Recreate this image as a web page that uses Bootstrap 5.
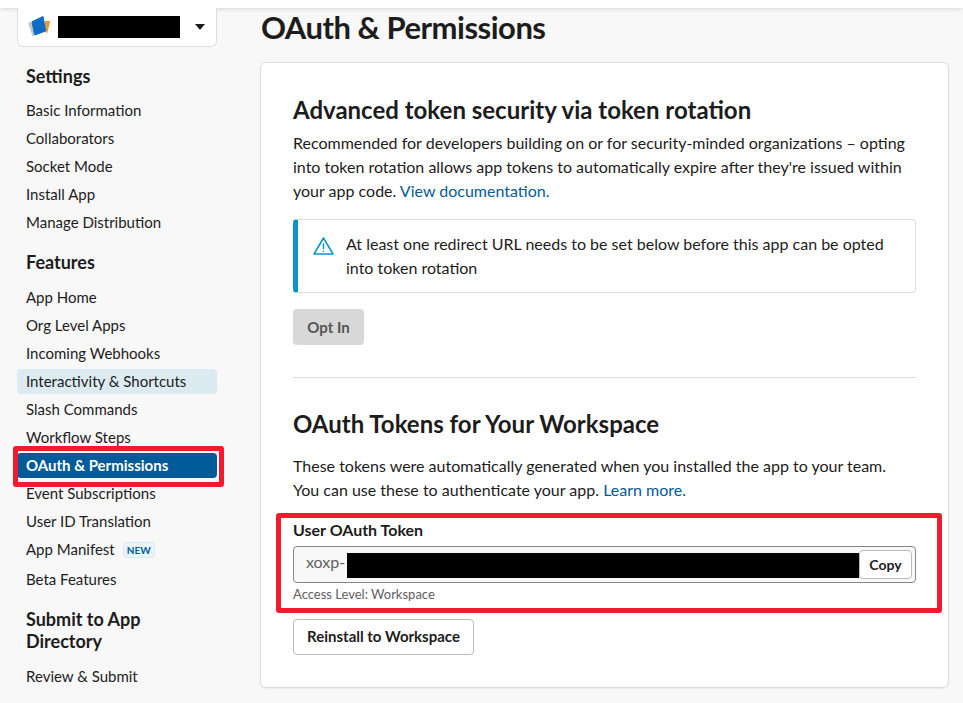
<!DOCTYPE html>
<html lang="en">
<head>
<meta charset="utf-8">
<title>OAuth &amp; Permissions</title>
<link rel="stylesheet" href="https://cdn.jsdelivr.net/npm/bootstrap@5.3.0/dist/css/bootstrap.min.css">
<style>
html,body{height:703px;overflow:hidden}
body{background:#f8f8f8;font-family:Lato,"Liberation Sans",sans-serif;color:#1d1c1d;font-size:15px;line-height:24px;position:relative}
.topstrip{height:8px;background:#fff;box-shadow:0 1px 4px rgba(0,0,0,.14)}
.shell{padding-left:17px;gap:43px}
.sidebar{width:200px;flex:none}
.appsel{height:39px;background:#fff;border:1px solid #ddd;border-top:0;border-radius:0 0 6px 6px;padding:0 11px 0 10px}
.redact{background:#000;height:22px;width:122px}
.caret{width:0;height:0;border-left:5px solid transparent;border-right:5px solid transparent;border-top:6px solid #1d1c1d}
.sidehead{font-size:18px;line-height:22px;font-weight:700;padding-left:9px;margin:16px 0 0}
.sidehead.firsthead{margin-top:18px}
.sidehead.featurehead{margin-top:16px}
.sidelist{list-style:none;margin:11px 0 0;padding:0}
.sidelist.lastlist{margin-top:12px}
.sidelist a{display:block;height:25px;line-height:24px;margin-bottom:3px;padding-left:9px;border-radius:4px;color:#1d1c1d;text-decoration:none}
.sidelist a.hover-item{background:#dcebf1}
.sidelist a.current{background:#005b98;color:#fff;font-weight:700}
.sidelist a.betaitem{margin-top:5px}
.sidelist.featurelist{margin-top:12px}
.newtag{font-size:10px;line-height:14px;font-weight:700;color:#005b98;background:#e8f5fa;border:1px solid #d4ebf4;border-radius:4px;padding:0 3px;margin-left:8px;display:inline-block;vertical-align:1px}
.maincol{width:689px;flex:none}
.pagetitle{font-size:31px;line-height:38px;font-weight:700;margin:0 0 16px;letter-spacing:-.5px;padding-left:1px}
.panel{height:626px;background:#fff;border:1px solid #ddd;border-radius:6px;padding:32px;box-shadow:0 1px 2px rgba(0,0,0,.06);font-size:16px}
.panelhead{font-size:24px;line-height:30px;font-weight:700;margin:0 0 6px}
.panelhead.tokenhead{margin-bottom:15px}
.panel a{color:#005b98;text-decoration:none}
.notice{height:74px;margin-top:16px;border:1px solid #ddd;border-left:5px solid #0a94cc;border-radius:4px;padding:12px 16px 12px 15px;gap:12px}
.notice p{margin:0}
.optbtn{height:36px;width:71px;background:#d8d8d8;color:#555;font-weight:700;border:0;border-radius:4px;margin-top:16px;padding:0;font-size:15px}
.rule{margin:32px 0 31px;border:0;border-top:1px solid #ddd;opacity:1}
.tokenlabel{font-weight:700;line-height:20px;margin:18px 0 6px}
.tokenbox{height:37px;border:1px solid #868686;border-radius:4px;background:#f8f8f8;padding:3px 3px 3px 12px}
.xoxp{color:#616061;width:41px;flex:none}
.tokenredact{background:#000;height:25px;flex:1;margin-top:3px}
.copybtn{width:53px;height:29px;background:#fff;border:1px solid #bbb;border-radius:4px;font-size:14px;font-weight:700;padding:0;color:#1d1c1d}
.hint{font-size:13px;line-height:16px;color:#616061;margin-top:3px}
.reinstall{height:36px;width:181px;margin-top:17px;background:#fff;border:1px solid #bbb;border-radius:4px;font-weight:700;font-size:15px;padding:0 0 2px;color:#1d1c1d}
.optbtn{padding-bottom:1px}
.redbox{position:absolute;border:5px solid #ee1c2c;border-radius:3px;pointer-events:none}
.redone{left:13px;top:446px;width:211px;height:41px}
.redtwo{left:276px;top:513px;width:666px;height:100px}
</style>
</head>
<body>
<div class="topstrip"></div>
<div class="d-flex shell">
  <nav class="sidebar">
    <div class="appsel d-flex align-items-center">
      <svg width="22" height="22" viewBox="-1 0 22 22" class="flex-shrink-0">
        <path d="M-1 6.7 L3 5.7 L5.7 19 L3.6 20.5Z" fill="#c3c8cd"/>
        <path d="M15.7 5 L21.3 5 L18 18 L16.5 15Z" fill="#e89a36"/>
        <path d="M3 5.7 L14 0.5 L16.7 15 L5.7 19Z" fill="#0d6cc4" stroke="#0d6cc4" stroke-linejoin="round"/>
      </svg>
      <div class="redact ms-2"></div>
      <div class="caret ms-auto"></div>
    </div>
    <h2 class="sidehead firsthead">Settings</h2>
    <ul class="sidelist">
      <li><a href="#">Basic Information</a></li>
      <li><a href="#">Collaborators</a></li>
      <li><a href="#">Socket Mode</a></li>
      <li><a href="#">Install App</a></li>
      <li><a href="#">Manage Distribution</a></li>
    </ul>
    <h2 class="sidehead featurehead">Features</h2>
    <ul class="sidelist featurelist">
      <li><a href="#">App Home</a></li>
      <li><a href="#">Org Level Apps</a></li>
      <li><a href="#">Incoming Webhooks</a></li>
      <li><a href="#" class="hover-item">Interactivity &amp; Shortcuts</a></li>
      <li><a href="#">Slash Commands</a></li>
      <li><a href="#">Workflow Steps</a></li>
      <li><a href="#" class="current">OAuth &amp; Permissions</a></li>
      <li><a href="#">Event Subscriptions</a></li>
      <li><a href="#">User ID Translation</a></li>
      <li><a href="#">App Manifest<span class="newtag">NEW</span></a></li>
      <li><a href="#" class="betaitem">Beta Features</a></li>
    </ul>
    <h2 class="sidehead">Submit to App Directory</h2>
    <ul class="sidelist lastlist">
      <li><a href="#">Review &amp; Submit</a></li>
    </ul>
  </nav>
  <main class="maincol">
    <h1 class="pagetitle">OAuth &amp; Permissions</h1>
    <section class="panel">
      <h2 class="panelhead">Advanced token security via token rotation</h2>
      <p class="mb-0">Recommended for developers building on or for security-minded organizations – opting into token rotation allows app tokens to automatically expire after they're issued within your app code. <a href="#">View documentation.</a></p>
      <div class="notice d-flex">
        <svg width="21" height="20" viewBox="0 0 21 20" class="flex-shrink-0 mt-1" fill="none" stroke="#0a94cc" stroke-width="1.5" stroke-linejoin="round" stroke-linecap="round">
          <path d="M10.5 2 L1 18 H20Z"/>
          <path d="M10.5 8 V12.5 M10.5 15.3 V15.5"/>
        </svg>
        <p>At least one redirect URL needs to be set below before this app can be opted into token rotation</p>
      </div>
      <button class="optbtn d-block" type="button">Opt In</button>
      <hr class="rule">
      <h2 class="panelhead tokenhead">OAuth Tokens for Your Workspace</h2>
      <p class="mb-0">These tokens were automatically generated when you installed the app to your team.<br>You can use these to authenticate your app. <a href="#">Learn more.</a></p>
      <div class="tokenlabel">User OAuth Token</div>
      <div class="tokenbox d-flex">
        <span class="xoxp">xoxp-</span>
        <div class="tokenredact"></div>
        <button class="copybtn" type="button">Copy</button>
      </div>
      <div class="hint">Access Level: Workspace</div>
      <button class="reinstall d-block" type="button">Reinstall to Workspace</button>
    </section>
  </main>
</div>
<div class="redbox redone"></div>
<div class="redbox redtwo"></div>
</body>
</html>
